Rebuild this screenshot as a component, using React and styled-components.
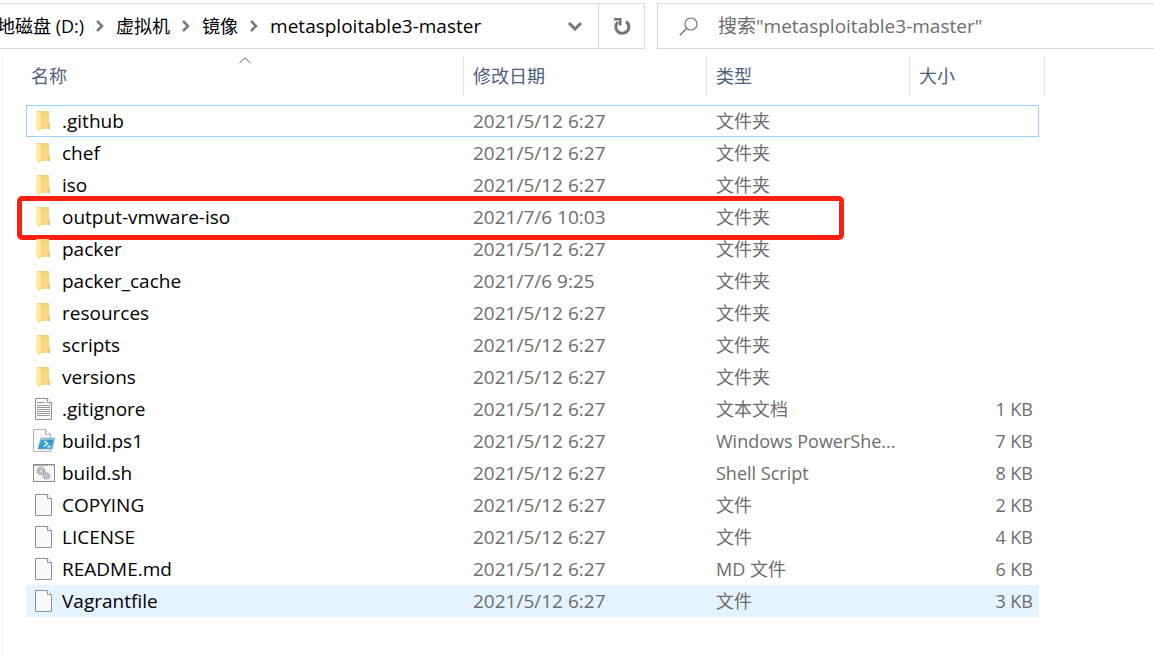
import React, { useState } from "react";
import styled, { createGlobalStyle } from "styled-components";

const GlobalStyle = createGlobalStyle`
  * {
    box-sizing: border-box;
  }
  body {
    margin: 0;
    background: #ffffff;
    color: #000000;
    font-family: "Open Sans", "Noto Sans CJK SC", sans-serif;
    font-size: 18px;
    line-height: 24px;
    overflow-x: hidden;
  }
  button,
  input {
    font: inherit;
    color: inherit;
    border: 0;
    background: none;
    padding: 0;
    margin: 0;
    outline: none;
  }
`;

const Explorer = styled.div`
  min-height: 100vh;
  display: flex;
  flex-direction: column;
`;

const TopBar = styled.header`
  display: grid;
  grid-template-columns: minmax(0, 645px) minmax(0, 1fr);
  column-gap: 12px;
  padding-top: 3px;
`;

const AddressBar = styled.div`
  height: 46px;
  display: flex;
  align-items: stretch;
  border: 1px solid #d9d9d9;
  border-left: 0;
`;

const Crumbs = styled.nav`
  flex: 1;
  min-width: 0;
  display: flex;
  align-items: center;
  gap: 12px;
  margin-left: -3px;
`;

const Crumb = styled.a`
  color: #000000;
  text-decoration: none;
  white-space: nowrap;
  font-size: ${(props) => (props.$latin ? "19px" : "18px")};
`;

const BarButton = styled.button`
  width: 46px;
  display: flex;
  align-items: center;
  justify-content: center;
  border-left: ${(props) => (props.$divided ? "1px solid #d9d9d9" : "0")};
`;

const SearchBox = styled.label`
  height: 46px;
  display: flex;
  align-items: center;
  gap: 20px;
  padding-left: 21px;
  border: 1px solid #d9d9d9;
  border-right: 0;
`;

const SearchInput = styled.input`
  flex: 1;
  min-width: 0;
  font-size: 19px;
  &::placeholder {
    color: #6d6d6d;
    opacity: 1;
  }
`;

const ListPane = styled.main`
  flex: 1;
  margin: 7px 0 0 1px;
  padding-left: 23px;
  border-left: 2px solid #f6f6f6;
`;

const FileTable = styled.table`
  width: 1013px;
  table-layout: fixed;
  border-collapse: collapse;
`;

const NameCol = styled.col`
  width: 438px;
`;
const DateCol = styled.col`
  width: 243px;
`;
const TypeCol = styled.col`
  width: 203px;
`;

const HeadCell = styled.th`
  padding: 0 0 9px;
  font-weight: 400;
`;

const SortButton = styled.button`
  position: relative;
  display: block;
  width: ${(props) => (props.$last ? "calc(100% + 6px)" : "100%")};
  height: 40px;
  padding-left: ${(props) => (props.$first ? "5px" : "9px")};
  border-right: 1px solid #e5e5e5;
  color: #4c607a;
  text-align: left;
`;

const SortMark = styled.svg`
  position: absolute;
  top: 1px;
  left: 50%;
  transform: translateX(-50%);
`;

const Row = styled.tr`
  position: relative;
  height: 32px;
  background: ${(props) => (props.$hovered ? "#e5f3ff" : "transparent")};
  outline: ${(props) => (props.$focused ? "1px solid #99d1ff" : "none")};
  outline-offset: -1px;
`;

// red frame drawn over the whole row
const RowMark = styled.span`
  position: absolute;
  top: -5px;
  right: 195px;
  bottom: -7px;
  left: -9px;
  border: 5px solid #ff1f10;
  border-radius: 5px;
  pointer-events: none;
`;

const Cell = styled.td`
  height: 32px;
  padding: 0 9px;
  color: #6d6d6d;
  font-size: ${(props) => (props.$latin ? "19px" : "18px")};
  white-space: nowrap;
`;

const SizeCell = styled(Cell)`
  padding-right: 6px;
  text-align: right;
`;

const FileName = styled.div`
  display: flex;
  align-items: center;
  gap: 7px;
  margin-left: -2px;
  color: #000000;
`;

const FileIcon = styled.svg`
  flex: none;
  width: 22px;
  height: 24px;
`;

function FolderIcon() {
  return (
    <FileIcon viewBox="0 0 22 24" aria-hidden="true">
      <defs>
        <linearGradient id="folderBack" x1="0" y1="0" x2="1" y2="1">
          <stop offset="0" stopColor="#f1cf75" />
          <stop offset="1" stopColor="#f9dd88" />
        </linearGradient>
        <linearGradient id="folderFront" x1="0" y1="0" x2="1" y2="1">
          <stop offset="0" stopColor="#ffefb8" />
          <stop offset="1" stopColor="#fde39b" />
        </linearGradient>
      </defs>
      <path d="M4 2h12v12l1 1v5H7z" fill="url(#folderBack)" />
      <path d="M15 14h1l1 1v5h-2z" fill="#eccb75" />
      <path d="M3 2l5 3v12l-1 6-4-3z" fill="url(#folderFront)" />
    </FileIcon>
  );
}

function PageIcon({ lines }) {
  return (
    <FileIcon viewBox="0 0 22 24" aria-hidden="true">
      <path d="M2.5 1.5h12l4 4v17h-16z" fill="#f8f9fa" stroke="#929292" />
      <path d="M14.5 1.5v4h4" fill="#ffffff" stroke="#929292" />
      {lines && (
        <path
          d="M4 5.5h8M4 8.5h13M4 10.5h13M4 12.5h13M4 14.5h13M4 16.5h13M4 18.5h13"
          stroke="#9a9a9a"
        />
      )}
    </FileIcon>
  );
}

function PowerShellIcon() {
  return (
    <FileIcon viewBox="0 0 22 24" aria-hidden="true">
      <defs>
        <linearGradient id="shellBlue" x1="0" y1="0" x2="1" y2="1">
          <stop offset="0" stopColor="#65b9e2" />
          <stop offset=".5" stopColor="#2697ce" />
          <stop offset="1" stopColor="#65bde5" />
        </linearGradient>
      </defs>
      <path d="M.5 .5h12l5 5v17H.5z" fill="#fafafa" stroke="#b4b4b4" />
      <path d="M12.5 .5v5h5" fill="#ffffff" stroke="#a8a8a8" />
      <path
        d="M8 9h13.5l-2.5 11H5z"
        fill="url(#shellBlue)"
        stroke="#74a8bf"
        strokeWidth=".8"
      />
      <path d="M7.5 10H21" stroke="#c5e2ee" />
      <path
        d="M11.5 12l3 2.5-4 3M14.5 17.5h3"
        fill="none"
        stroke="#ffffff"
        strokeWidth="1.4"
      />
    </FileIcon>
  );
}

function ScriptIcon() {
  return (
    <FileIcon viewBox="0 0 22 24" aria-hidden="true">
      <path d="M.5 3.5h21v17H.5z" fill="#f6f7f8" stroke="#8c8c8c" />
      <path d="M1 4.5h20" stroke="#a9a9a9" />
      <path d="M15 4.5h1m1 0h1m1 0h1" stroke="#ffffff" />
      <g fill="#d9dde1" stroke="#8b949c">
        <circle cx="8" cy="10" r="3.5" strokeWidth="1.5" strokeDasharray="1.5 .7" />
        <circle cx="13.5" cy="15" r="3" strokeWidth="1.4" strokeDasharray="1.3 .7" />
      </g>
      <g fill="#f6f7f8" stroke="#8b949c" strokeWidth=".8">
        <circle cx="8" cy="10" r="1.5" />
        <circle cx="13.5" cy="15" r="1.2" />
      </g>
    </FileIcon>
  );
}

const icons = {
  folder: <FolderIcon />,
  text: <PageIcon lines />,
  powershell: <PowerShellIcon />,
  script: <ScriptIcon />,
  page: <PageIcon />,
};

const folderNames = [
  ".github",
  "chef",
  "iso",
  "output-vmware-iso",
  "packer",
  "packer_cache",
  "resources",
  "scripts",
  "versions",
];

const changed = {
  "output-vmware-iso": "2021/7/6 10:03",
  packer_cache: "2021/7/6 9:25",
};

const files = [
  ...folderNames.map((name) => ({ name, type: "文件夹", icon: "folder" })),
  { name: ".gitignore", type: "文本文档", size: "1 KB", icon: "text" },
  {
    name: "build.ps1",
    type: "Windows PowerShe...",
    size: "7 KB",
    icon: "powershell",
  },
  { name: "build.sh", type: "Shell Script", size: "8 KB", icon: "script" },
  { name: "COPYING", type: "文件", size: "2 KB", icon: "page" },
  { name: "LICENSE", type: "文件", size: "4 KB", icon: "page" },
  { name: "README.md", type: "MD 文件", size: "6 KB", icon: "page" },
  { name: "Vagrantfile", type: "文件", size: "3 KB", icon: "page" },
];

function CrumbArrow() {
  return (
    <svg width="8" height="12" viewBox="0 0 8 12" aria-hidden="true">
      <path d="M1 1l5 5-5 5" fill="none" stroke="#7a7a7a" strokeWidth="2.5" />
    </svg>
  );
}

export default function App() {
  const [query, setQuery] = useState("");

  return (
    <Explorer>
      <GlobalStyle />
      <TopBar>
        <AddressBar>
          <Crumbs aria-label="Path">
            <Crumb href="#d">地磁盘 (D:)</Crumb>
            <CrumbArrow />
            <Crumb href="#vm">虚拟机</Crumb>
            <CrumbArrow />
            <Crumb href="#images">镜像</Crumb>
            <CrumbArrow />
            <Crumb href="#master" $latin>
              metasploitable3-master
            </Crumb>
          </Crumbs>
          <BarButton aria-label="History">
            <svg width="16" height="10" viewBox="0 0 16 10">
              <path d="M2 2l6 6 6-6" fill="none" stroke="#777777" strokeWidth="3" />
            </svg>
          </BarButton>
          <BarButton $divided aria-label="Refresh">
            <svg width="18" height="18" viewBox="0 0 18 18">
              <path
                d="M5 5A6.5 6.5 0 1 0 13 4.5"
                fill="none"
                stroke="#757575"
                strokeWidth="3"
              />
              <path d="M1 1h7.5v7.5H6V3.5H1z" fill="#757575" />
            </svg>
          </BarButton>
        </AddressBar>
        <SearchBox>
          <svg width="19" height="19" viewBox="0 0 19 19" aria-hidden="true">
            <circle cx="12" cy="7" r="6" fill="none" stroke="#777777" strokeWidth="1.2" />
            <path d="M7.8 11.2L.8 18.2" stroke="#777777" strokeWidth="1.4" />
          </svg>
          <SearchInput
            aria-label="Search"
            placeholder={'搜索"metasploitable3-master"'}
            value={query}
            onChange={(e) => setQuery(e.target.value)}
          />
        </SearchBox>
      </TopBar>
      <ListPane>
        <FileTable>
          <colgroup>
            <NameCol />
            <DateCol />
            <TypeCol />
            <col />
          </colgroup>
          <thead>
            <tr>
              <HeadCell>
                <SortButton $first>
                  名称
                  <SortMark width="12" height="7" viewBox="0 0 12 7">
                    <path d="M.5 6L6 .8 11.5 6" fill="none" stroke="#5f5f5f" />
                  </SortMark>
                </SortButton>
              </HeadCell>
              <HeadCell>
                <SortButton>修改日期</SortButton>
              </HeadCell>
              <HeadCell>
                <SortButton>类型</SortButton>
              </HeadCell>
              <HeadCell>
                <SortButton $last>大小</SortButton>
              </HeadCell>
            </tr>
          </thead>
          <tbody>
            {files.map((file) => (
              <Row
                key={file.name}
                $focused={file.name === ".github"}
                $hovered={file.name === "Vagrantfile"}
              >
                <Cell $latin>
                  <FileName>
                    {icons[file.icon]}
                    {file.name}
                  </FileName>
                  {file.name === "output-vmware-iso" && <RowMark />}
                </Cell>
                <Cell $latin>{changed[file.name] || "2021/5/12 6:27"}</Cell>
                <Cell>{file.type}</Cell>
                <SizeCell>{file.size}</SizeCell>
              </Row>
            ))}
          </tbody>
        </FileTable>
      </ListPane>
    </Explorer>
  );
}
